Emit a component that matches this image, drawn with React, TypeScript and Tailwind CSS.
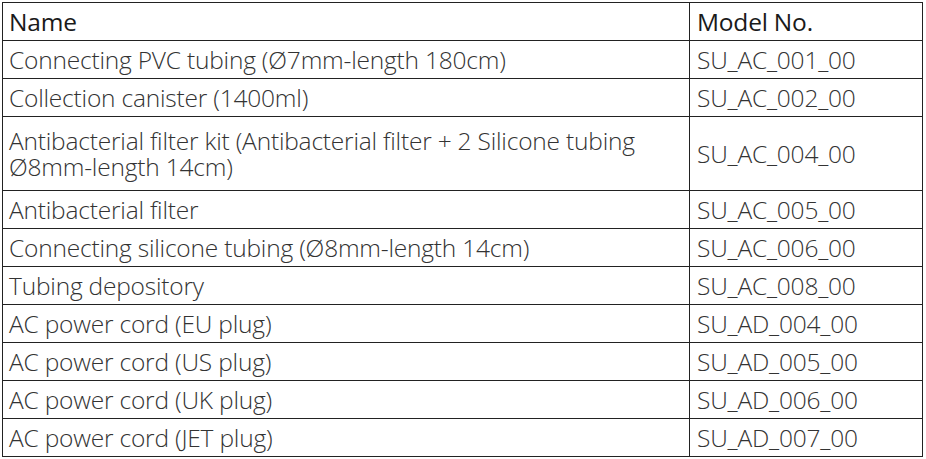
const rows: { name: string; model: string; tall?: boolean }[] = [
  { name: 'Connecting PVC tubing (Ø7mm-length 180cm)', model: 'SU_AC_001_00' },
  { name: 'Collection canister (1400ml)', model: 'SU_AC_002_00' },
  {
    name: 'Antibacterial filter kit (Antibacterial filter + 2 Silicone tubing Ø8mm-length 14cm)',
    model: 'SU_AC_004_00',
    tall: true,
  },
  { name: 'Antibacterial filter', model: 'SU_AC_005_00' },
  { name: 'Connecting silicone tubing (Ø8mm-length 14cm)', model: 'SU_AC_006_00' },
  { name: 'Tubing depository', model: 'SU_AC_008_00' },
  { name: 'AC power cord (EU plug)', model: 'SU_AD_004_00' },
  { name: 'AC power cord (US plug)', model: 'SU_AD_005_00' },
  { name: 'AC power cord (UK plug)', model: 'SU_AD_006_00' },
  { name: 'AC power cord (JET plug)', model: 'SU_AD_007_00' },
]

export default function App() {
  return (
    <div className="h-[459px] w-[926px] bg-white p-[2px] font-['Open_Sans',sans-serif]">
      <table className="w-[921px] table-fixed border-collapse text-[24.5px] leading-[26px] tracking-[-0.2px] text-[#333]">
        <colgroup>
          <col className="w-[687px]" />
          <col />
        </colgroup>
        <thead>
          <tr className="h-[38px]">
            <th className="border border-[#222] px-[6px] text-left align-middle font-normal text-[#1a1a1a]">Name</th>
            <th className="border border-[#222] px-[7px] text-left align-middle font-normal text-[#1a1a1a]">Model No.</th>
          </tr>
        </thead>
        <tbody>
          {rows.map((row) => (
            <tr key={row.model} className={row.tall ? 'h-[74px]' : 'h-[38px]'}>
              <td className="border border-[#222] px-[6px] align-middle font-light">
                {row.tall ? (
                  <span className="block w-[668px]">{row.name}</span>
                ) : (
                  row.name
                )}
              </td>
              <td className="border border-[#222] px-[7px] align-middle font-light">{row.model}</td>
            </tr>
          ))}
        </tbody>
      </table>
    </div>
  )
}
